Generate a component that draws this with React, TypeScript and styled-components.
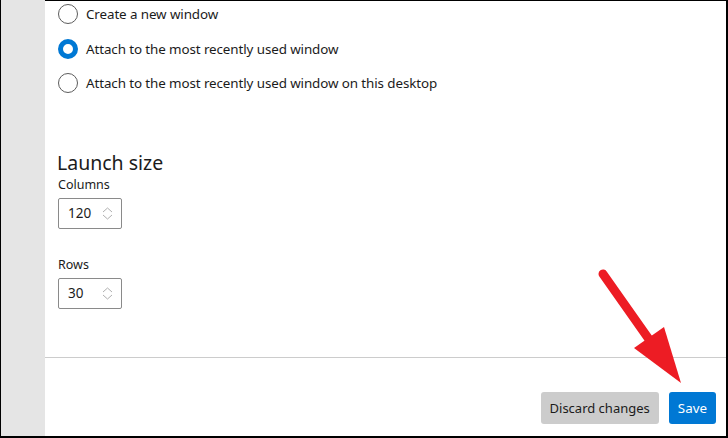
import React from "react";
import styled, { createGlobalStyle } from "styled-components";

const Global = createGlobalStyle`
  html, body { margin: 0; padding: 0; background: #fff; }
  body { font-family: "Noto Sans", "Open Sans", sans-serif; color: #1a1a1a; }
  * { box-sizing: border-box; }
`;

const Frame = styled.div`
  position: relative;
  width: 728px;
  height: 438px;
  display: flex;
  border-left: 1px solid #000;
  border-right: 2px solid #000;
  border-bottom: 2px solid #000;
  overflow: hidden;
`;

const Sidebar = styled.div`
  width: 44px;
  background: #e5e5e5;
  flex-shrink: 0;
`;

const Main = styled.div`
  flex: 1;
  display: flex;
  flex-direction: column;
  border-top: 1px solid #000;
  background: #fff;
`;

const Content = styled.div`
  flex: 1;
  padding-left: 13px;
`;

const RadioList = styled.div`
  display: flex;
  flex-direction: column;
  margin-top: -4px;
`;

const RadioRow = styled.label`
  display: flex;
  align-items: center;
  gap: 8px;
  height: 34.5px;
  font-size: 13.4px;
  letter-spacing: -0.1px;
  color: #1b1b1b;
`;

const RadioCircle = styled.span<{ $checked?: boolean }>`
  width: 20px;
  height: 20px;
  border-radius: 50%;
  flex-shrink: 0;
  border: ${(p) => (p.$checked ? "5.5px solid #0078d4" : "1px solid #5c5c5c")};
  background: #fff;
`;

const Section = styled.div`
  margin-top: 49px;
  display: flex;
  flex-direction: column;
`;

const Heading = styled.h2`
  margin: 0 0 0 -1px;
  font-size: 19.5px;
  font-weight: 400;
  line-height: 26px;
  color: #1b1b1b;
`;

const FieldLabel = styled.div`
  font-size: 12.5px;
  line-height: 18px;
  color: #1b1b1b;
`;

const Field = styled.div<{ $gap?: number }>`
  display: flex;
  flex-direction: column;
  gap: 4px;
  margin-top: ${(p) => p.$gap ?? 0}px;
`;

const NumberBox = styled.div`
  width: 64px;
  height: 31px;
  border: 1px solid #8a8a8a;
  border-radius: 2px;
  display: flex;
  align-items: center;
  justify-content: space-between;
  padding: 0 8px 0 9px;
  font-size: 13.5px;
  color: #1b1b1b;
`;

const Footer = styled.div`
  height: 79px;
  border-top: 1px solid #cccccc;
  display: flex;
  justify-content: flex-end;
  align-items: flex-start;
  gap: 10px;
  padding: 34px 10px 0 0;
`;

const Button = styled.button<{ $primary?: boolean }>`
  height: 32px;
  border: none;
  border-radius: 3px;
  padding: 0 9px;
  font-family: "Noto Sans", "Open Sans", sans-serif;
  font-size: ${(p) => (p.$primary ? 13.4 : 13)}px;
  background: ${(p) => (p.$primary ? "#0078d4" : "#cccccc")};
  color: ${(p) => (p.$primary ? "#ffffff" : "#1b1b1b")};
`;

const ArrowOverlay = styled.svg`
  position: absolute;
  left: 0;
  top: 0;
  pointer-events: none;
`;

const Spin = () => (
  <svg width="11" height="13" viewBox="0 0 11 13">
    <path d="M1 5 L5.5 1 L10 5" fill="none" stroke="#b0b0b0" strokeWidth="1" />
    <path d="M1 8 L5.5 12 L10 8" fill="none" stroke="#b0b0b0" strokeWidth="1" />
  </svg>
);

export default function App() {
  return (
    <>
      <Global />
      <Frame>
        <Sidebar />
        <Main>
          <Content>
            <RadioList>
              <RadioRow>
                <RadioCircle />
                Create a new window
              </RadioRow>
              <RadioRow>
                <RadioCircle $checked />
                Attach to the most recently used window
              </RadioRow>
              <RadioRow>
                <RadioCircle />
                Attach to the most recently used window on this desktop
              </RadioRow>
            </RadioList>
            <Section>
              <Heading>Launch size</Heading>
              <Field>
                <FieldLabel>Columns</FieldLabel>
                <NumberBox>
                  <span>120</span>
                  <Spin />
                </NumberBox>
              </Field>
              <Field $gap={27}>
                <FieldLabel>Rows</FieldLabel>
                <NumberBox>
                  <span>30</span>
                  <Spin />
                </NumberBox>
              </Field>
            </Section>
          </Content>
          <Footer>
            <Button>Discard changes</Button>
            <Button $primary>Save</Button>
          </Footer>
        </Main>
        <ArrowOverlay width="728" height="438" viewBox="0 0 728 438">
          <line x1="602" y1="274" x2="652" y2="345" stroke="#ed1c24" strokeWidth="9" strokeLinecap="round" />
          <polygon points="633,348 663,327 680,383" fill="#ed1c24" />
        </ArrowOverlay>
      </Frame>
    </>
  );
}
